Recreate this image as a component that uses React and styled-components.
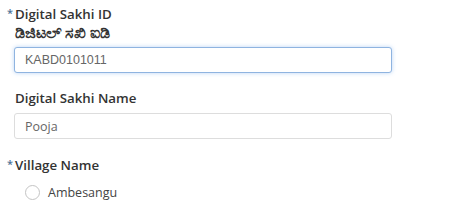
import React from 'react'
import styled, { createGlobalStyle } from 'styled-components';

const Global = createGlobalStyle`
  body {
    margin: 0;
    background: #fff;
    font-family: "Open Sans", "Noto Sans", sans-serif;
  }
`;

const Form = styled.div`
  display: flex;
  flex-direction: column;
  padding: 6px 0 0 14px;
  width: 378px;
`;

const Field = styled.div`
  display: flex;
  flex-direction: column;
  margin-bottom: ${({ $gap }) => $gap || 0}px;
`;

const Label = styled.label`
  position: relative;
  font-size: 13.3px;
  font-weight: 600;
  color: #333;
  line-height: 17px;
  padding-left: 1px;
`;

const Star = styled.span`
  position: absolute;
  left: -7px;
  top: -2px;
  font-size: 11px;
  font-weight: 600;
  color: #4f7396;
`;

const SubLabel = styled.div`
  font-size: 16px;
  font-weight: 600;
  color: #333;
  line-height: 19px;
  padding-left: 1px;
`;

const Input = styled.input`
  box-sizing: border-box;
  width: 378px;
  height: 26px;
  margin-top: ${({ $top }) => $top}px;
  padding: 0 10px;
  border: 1px solid ${({ $focus }) => ($focus ? '#8fb4e0' : '#ddd')};
  border-radius: 3px;
  box-shadow: ${({ $focus }) => ($focus ? '0 0 4px rgba(102,160,230,0.45)' : 'none')};
  font-family: ${({ $mono }) => ($mono ? '"Liberation Sans", Arial, sans-serif' : '"Open Sans", sans-serif')};
  font-size: 12.5px;
  color: #666;
  background: #fff;
  outline: none;
`;

const RadioRow = styled.label`
  display: flex;
  align-items: center;
  gap: 8px;
  margin-top: 10px;
  padding-left: 11px;
  font-size: 12.5px;
  color: #444;
`;

const Circle = styled.span`
  box-sizing: border-box;
  flex: none;
  width: 15px;
  height: 15px;
  border-radius: 50%;
  border: 1.5px solid #c4c4c4;
  background: #fff;
`;

const App = () => {
  return (
    <>
      <Global />
      <Form>
        <Field $gap={17}>
          <Label><Star>*</Star>Digital Sakhi ID</Label>
          <SubLabel>ಡಿಜಿಟಲ್ ಸಖಿ ಐಡಿ</SubLabel>
          <Input $top={5} $focus $mono defaultValue="KABD0101011" />
        </Field>
        <Field $gap={18}>
          <Label>Digital Sakhi Name</Label>
          <Input $top={6} defaultValue="Pooja" />
        </Field>
        <Field>
          <Label><Star>*</Star>Village Name</Label>
          <RadioRow>
            <Circle />
            Ambesangu
          </RadioRow>
        </Field>
      </Form>
    </>
  )
}

export default App
